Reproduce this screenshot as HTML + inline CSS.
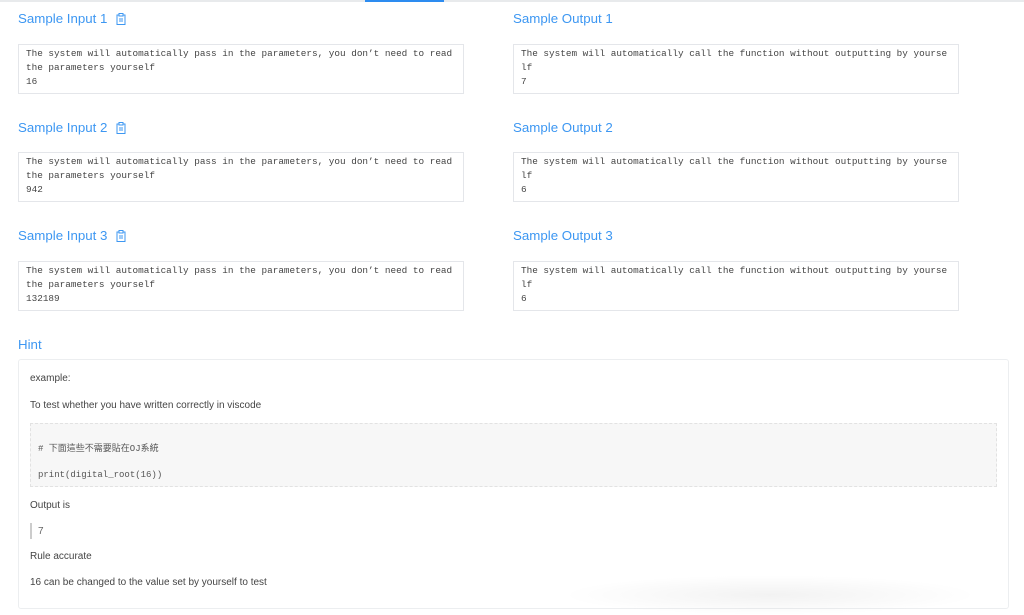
<!DOCTYPE html>
<html><head><meta charset="utf-8"><style>
*{margin:0;padding:0;box-sizing:border-box}
body{width:1024px;height:597px;overflow:hidden;background:#fff;font-family:"Liberation Sans","Noto Sans CJK TC",sans-serif;position:relative}
.topline{position:absolute;left:0;top:0;width:1024px;height:2px;background:#e8eaec}
.topblue{position:absolute;left:365px;top:0;width:79px;height:2px;background:#2d8cf0}
.t{position:absolute;color:#3d97f2;font-size:13.3px;line-height:16px}
.t svg{vertical-align:-2px;margin-left:9px}
.box{position:absolute;width:446px;height:50px;border:1px solid #e4e6ea;background:#fff;font-family:"Liberation Mono","Noto Sans CJK TC",monospace;font-size:9.35px;line-height:14px;color:#444;padding:2px 7px;white-space:pre}
.hint{position:absolute;left:18px;top:359px;width:991px;height:250px;border:1px solid #eceef0;border-radius:3px}
.p{position:absolute;left:30px;font-size:10px;color:#444;line-height:12px}
.code{position:absolute;left:30px;top:423px;width:967px;height:64px;background:#f7f7f7;border:1px dashed #e2e2e2;font-family:"Liberation Mono","Noto Sans CJK TC",monospace;font-size:9px;color:#555}
.shadow{position:absolute;left:560px;top:575px;width:420px;height:40px;background:radial-gradient(ellipse at center,rgba(0,0,0,0.05),rgba(0,0,0,0) 70%)}
</style></head><body>
<div class="topline"></div><div class="topblue"></div>
<div class="t" style="left:18px;top:11px">Sample Input 1<svg width="10" height="12" viewBox="0 0 10 12"><rect x="1" y="2" width="8" height="9.5" fill="none" stroke="#3d97f2"/><rect x="3" y="0.5" width="4" height="2.5" fill="#fff" stroke="#3d97f2"/><path d="M3 6h4M3 8h4" stroke="#3d97f2"/></svg></div>
<div class="t" style="left:513px;top:11px">Sample Output 1</div>
<div class="box" style="left:18px;top:44px">The system will automatically pass in the parameters, you don’t need to read
the parameters yourself
16</div>
<div class="box" style="left:513px;top:44px">The system will automatically call the function without outputting by yourse
lf
7</div>
<div class="t" style="left:18px;top:120px">Sample Input 2<svg width="10" height="12" viewBox="0 0 10 12"><rect x="1" y="2" width="8" height="9.5" fill="none" stroke="#3d97f2"/><rect x="3" y="0.5" width="4" height="2.5" fill="#fff" stroke="#3d97f2"/><path d="M3 6h4M3 8h4" stroke="#3d97f2"/></svg></div>
<div class="t" style="left:513px;top:120px">Sample Output 2</div>
<div class="box" style="left:18px;top:152px">The system will automatically pass in the parameters, you don’t need to read
the parameters yourself
942</div>
<div class="box" style="left:513px;top:152px">The system will automatically call the function without outputting by yourse
lf
6</div>
<div class="t" style="left:18px;top:228px">Sample Input 3<svg width="10" height="12" viewBox="0 0 10 12"><rect x="1" y="2" width="8" height="9.5" fill="none" stroke="#3d97f2"/><rect x="3" y="0.5" width="4" height="2.5" fill="#fff" stroke="#3d97f2"/><path d="M3 6h4M3 8h4" stroke="#3d97f2"/></svg></div>
<div class="t" style="left:513px;top:228px">Sample Output 3</div>
<div class="box" style="left:18px;top:261px">The system will automatically pass in the parameters, you don’t need to read
the parameters yourself
132189</div>
<div class="box" style="left:513px;top:261px">The system will automatically call the function without outputting by yourse
lf
6</div>
<div class="t" style="left:18px;top:337px">Hint</div>
<div class="hint"></div>
<div class="p" style="top:373px">example:</div>
<div class="p" style="top:400px">To test whether you have written correctly in viscode</div>
<div class="code"><div style="position:absolute;left:7px;top:17px"># 下面這些不需要貼在OJ系統</div><div style="position:absolute;left:7px;top:46px">print(digital_root(16))</div></div>
<div class="p" style="top:500px">Output is</div>
<div style="position:absolute;left:30px;top:523px;width:2px;height:16px;background:#ccc"></div>
<div class="p" style="left:38px;top:526px;color:#666">7</div>
<div class="p" style="top:551px">Rule accurate</div>
<div class="p" style="top:577px">16 can be changed to the value set by yourself to test</div>
<div class="shadow"></div>
</body></html>
